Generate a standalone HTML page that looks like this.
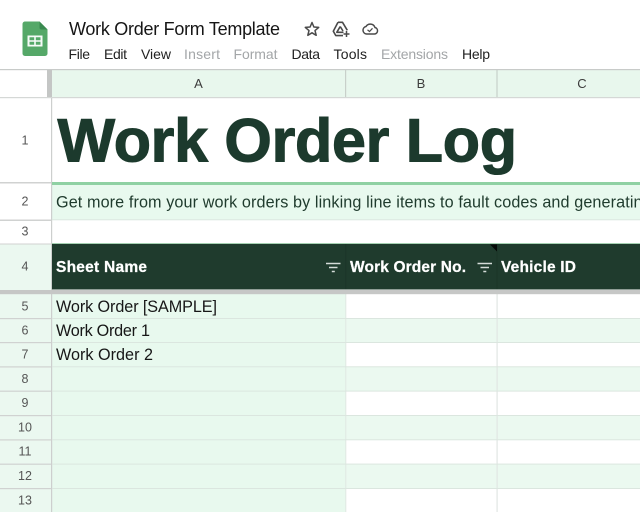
<!DOCTYPE html>
<html lang="en"><head><meta charset="utf-8"><title>Work Order Form Template</title>
<style>
html,body{margin:0;padding:0;background:#fff;width:640px;height:512px;overflow:hidden}
svg{display:block;filter:blur(.35px)}
text{font-family:"Liberation Sans",Arial,sans-serif}
.m{font-size:14px;fill:#222}
.d{font-size:14px;fill:#a3a6a8}
.c{font-size:13px;fill:#3c3c3c;text-anchor:middle}
.r{font-size:12.5px;fill:#555;text-anchor:middle}
.h{font-size:15.5px;font-weight:bold;fill:#fff;stroke:#fff;stroke-width:.25px}
.b{font-size:16.2px;fill:#171717}
</style></head><body>
<svg width="640" height="512" viewBox="0 0 640 512" xmlns="http://www.w3.org/2000/svg">
<rect width="640" height="512" fill="#fff"/>

<!-- Sheets logo -->
<path d="M25 21.5H39.5L47.5 29.5V53.5A2.5 2.5 0 0 1 45 56H25A2.5 2.5 0 0 1 22.5 53.5V24A2.5 2.5 0 0 1 25 21.5Z" fill="#55a868"/>
<path d="M39.5 21.5L47.5 29.5H41.5A2 2 0 0 1 39.5 27.5Z" fill="#3a8a50"/>
<path d="M27.5 35.5H42.5V46.5H27.5ZM29.5 37.3V40.2H34.2V37.3ZM35.8 37.3V40.2H40.5V37.3ZM29.5 41.8V44.7H34.2V41.8ZM35.8 41.8V44.7H40.5V41.8Z" fill="#f6fbf8" fill-rule="evenodd"/>

<!-- Title bar -->
<text x="69" y="35" font-size="18" fill="#161616" textLength="211" lengthAdjust="spacing">Work Order Form Template</text>
<path d="M312 22.5L313.9 27L318.7 27.4L315 30.6L316.2 35.3L312 32.8L307.8 35.3L309 30.6L305.3 27.4L310.1 27Z" fill="none" stroke="#4a4a4a" stroke-width="1.5" stroke-linejoin="round"/>
<path d="M338 22.3H342.5L347.3 30.3M338 22.3L333.3 31.2L335.8 35.6H343M340.2 26.5L336.8 32.3H343.5M340.2 26.5L343 31" fill="none" stroke="#4a4a4a" stroke-width="1.6" stroke-linejoin="round"/>
<path d="M346.5 31V37M343.5 34H349.5" stroke="#4a4a4a" stroke-width="1.5"/>
<path d="M366.5 34H374.5A3.3 3.3 0 0 0 375 27.5A5 5 0 0 0 366 26.5A3.8 3.8 0 0 0 366.5 34Z" fill="none" stroke="#4a4a4a" stroke-width="1.5"/>
<path d="M367.5 29.8L369.5 31.5L372.5 28.3" fill="none" stroke="#4a4a4a" stroke-width="1.2"/>

<!-- Menu -->
<text class="m" x="68.5" y="59" textLength="21.5">File</text>
<text class="m" x="104" y="59" textLength="23">Edit</text>
<text class="m" x="141" y="59" textLength="30">View</text>
<text class="d" x="184" y="59" textLength="36">Insert</text>
<text class="d" x="233.5" y="59" textLength="44">Format</text>
<text class="m" x="291.5" y="59" textLength="28.5">Data</text>
<text class="m" x="333.5" y="59" textLength="33.5">Tools</text>
<text class="d" x="381" y="59" textLength="67">Extensions</text>
<text class="m" x="462" y="59" textLength="28">Help</text>

<!-- Backgrounds -->
<rect x="52" y="70" width="588" height="27" fill="#e8f7ed"/>
<rect x="0" y="244" width="51" height="268" fill="#ebf8f0"/>
<rect x="52" y="185" width="588" height="35" fill="#e8f9ee"/>
<rect x="52" y="294" width="294" height="218" fill="#e8f9ee"/>
<rect x="346" y="319" width="294" height="24" fill="#ebf9f0"/>
<rect x="346" y="367" width="294" height="24" fill="#ebf9f0"/>
<rect x="346" y="415.5" width="294" height="24" fill="#ebf9f0"/>
<rect x="346" y="464" width="294" height="24.5" fill="#ebf9f0"/>

<!-- Header lines -->
<rect x="0" y="69" width="640" height="1.2" fill="#c8cbc9"/>
<rect x="0" y="97" width="640" height="1.2" fill="#d5d8d6"/>
<rect x="47" y="70" width="5" height="27" fill="#c4c6c5"/>
<rect x="345" y="70" width="1.2" height="27" fill="#c8d0ca"/>
<rect x="496.4" y="70" width="1.2" height="27" fill="#c8d0ca"/>

<!-- Row header vertical -->
<rect x="51" y="98" width="1.2" height="414" fill="#cdcfce"/>

<!-- Cell vertical lines -->
<rect x="345.3" y="294" width="1" height="218" fill="#dfe8e2"/>
<rect x="496.5" y="294" width="1.2" height="218" fill="#e2e6e3"/>

<!-- Row lines: row header -->
<g fill="#d0d2d1">
<rect x="0" y="182" width="51" height="1.5"/>
<rect x="0" y="219.5" width="51" height="1.5"/>
<rect x="0" y="243.5" width="51" height="1"/>
<rect x="0" y="318" width="51" height="1.2"/>
<rect x="0" y="342" width="51" height="1.2"/>
<rect x="0" y="366.3" width="51" height="1.2"/>
<rect x="0" y="390.6" width="51" height="1.2"/>
<rect x="0" y="415" width="51" height="1.2"/>
<rect x="0" y="439.3" width="51" height="1.2"/>
<rect x="0" y="463.6" width="51" height="1.2"/>
<rect x="0" y="488" width="51" height="1.2"/>
</g>
<!-- Row lines: cells -->
<g fill="#dbe6df">
<rect x="52" y="219.3" width="588" height="1"/>
<rect x="52" y="318" width="588" height="1"/>
<rect x="52" y="342" width="588" height="1"/>
<rect x="52" y="366.3" width="588" height="1"/>
<rect x="52" y="390.6" width="588" height="1"/>
<rect x="52" y="415" width="588" height="1"/>
<rect x="52" y="439.3" width="588" height="1"/>
<rect x="52" y="463.6" width="588" height="1"/>
<rect x="52" y="488" width="588" height="1"/>
</g>

<!-- Green rule under title -->
<rect x="52" y="182" width="588" height="3" fill="#8fd1a3"/>

<!-- Dark header row -->
<rect x="52" y="243.2" width="588" height="1" fill="#8fc69f"/>
<rect x="52" y="244" width="588" height="45.5" fill="#1f3b2d"/>
<rect x="345.3" y="244" width="1" height="45.5" fill="#1b3528"/>
<rect x="496.5" y="244" width="1" height="45.5" fill="#1b3528"/>
<path d="M490 244.5H497V251.5Z" fill="#050a07"/>
<rect x="0" y="290" width="640" height="4.2" fill="#c6c7c6"/>

<!-- Column letters -->
<text class="c" x="198.5" y="88">A</text>
<text class="c" x="421" y="88">B</text>
<text class="c" x="582" y="88">C</text>

<!-- Row numbers -->
<text class="r" x="25" y="144.5">1</text>
<text class="r" x="25" y="205.5">2</text>
<text class="r" x="25" y="235.5">3</text>
<text class="r" x="25" y="270.5">4</text>
<text class="r" x="25" y="310.5">5</text>
<text class="r" x="25" y="334.5">6</text>
<text class="r" x="25" y="358.5">7</text>
<text class="r" x="25" y="383">8</text>
<text class="r" x="25" y="407">9</text>
<text class="r" x="25" y="431.5">10</text>
<text class="r" x="25" y="455.5">11</text>
<text class="r" x="25" y="480">12</text>
<text class="r" x="25" y="504.5">13</text>

<!-- Content -->
<text x="57.5" y="161.7" font-size="61" font-weight="bold" fill="#1c3a2d" stroke="#1c3a2d" stroke-width="1.1" textLength="459.5" lengthAdjust="spacing">Work Order Log</text>
<text x="56" y="207.5" font-size="16.2" fill="#1f3b2d" letter-spacing=".1">Get more from your work orders by linking line items to fault codes and generating</text>

<text class="h" x="56" y="272" textLength="91">Sheet Name</text>
<text class="h" x="350" y="272" textLength="116">Work Order No.</text>
<text class="h" x="501" y="272" textLength="75">Vehicle ID</text>

<g stroke="#d5dcd8" stroke-width="1.4" fill="none">
<path d="M326 263.5H340.5M329 267.5H337.5M331.8 271.5H334.8"/>
<path d="M477.5 263.5H492M480.5 267.5H489M483.3 271.5H486.3"/>
</g>

<text class="b" x="56" y="312" textLength="161">Work Order [SAMPLE]</text>
<text class="b" x="56" y="336" textLength="94">Work Order 1</text>
<text class="b" x="56" y="360" textLength="97">Work Order 2</text>
</svg>
</body></html>
